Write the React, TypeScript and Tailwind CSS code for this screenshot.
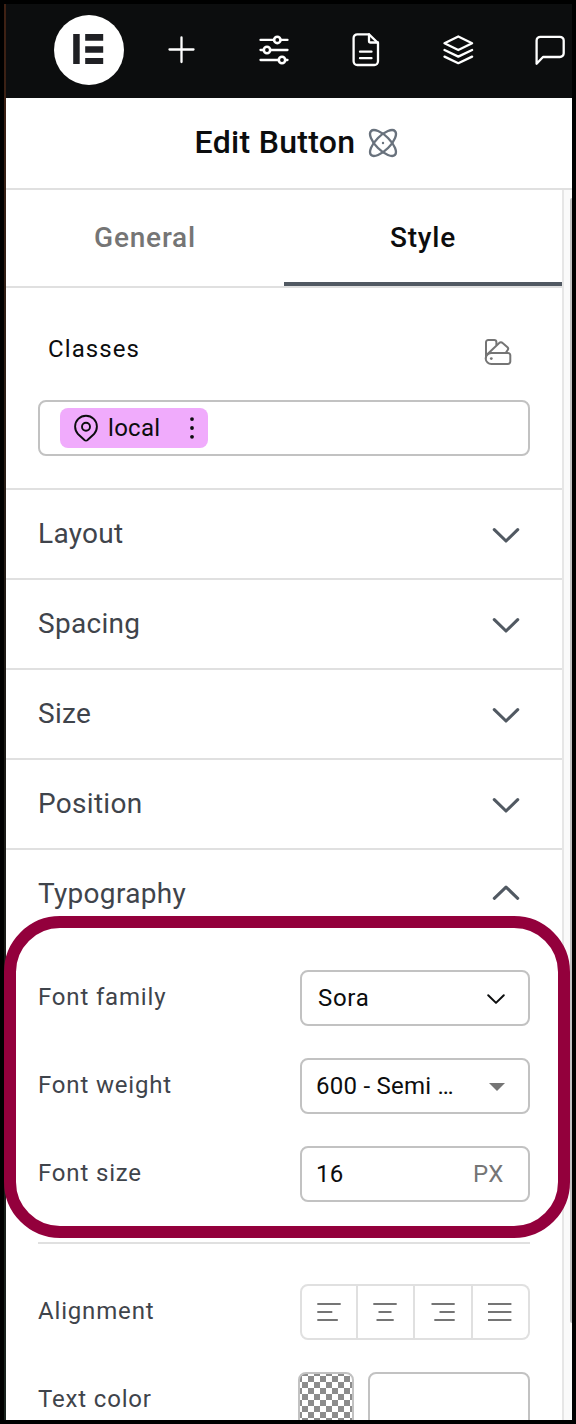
import { ReactNode } from "react";

const sections = ["Layout", "Spacing", "Size", "Position"];

// start and end of each line in the alignment buttons
const alignments = [
  { name: "left", width: "w-[58px]", lines: [[0.3, 23.7], [0.3, 15.3], [0.3, 20.8]] },
  { name: "center", width: "w-[57px] pr-px", lines: [[0.3, 23.7], [5.5, 18.5], [3.5, 20.7]] },
  { name: "right", width: "w-[58px]", lines: [[0.5, 23.7], [8.5, 23.7], [3.3, 23.7]] },
  { name: "justify", width: "w-[57px] pr-px", lines: [[0, 23.4], [0, 23.4], [0, 23.4]] },
];

const Logo = () => (
  <svg viewBox="0 0 70 70" className="w-[70px] h-[70px]">
    <circle cx="35" cy="35" r="35" fill="#fff" />
    <path
      d="M19.2 18.9h6.5v30.1h-6.5zM31.2 18.9h18v6.8h-18zM31.2 31.2h18v6.5h-18zM31.2 42.9h18v6.1h-18z"
      fill="#1f2024"
    />
  </svg>
);

const TopIcon = ({ label, children }: { label: string; children: ReactNode }) => (
  <button
    aria-label={label}
    className="flex items-center justify-center w-[92px] shrink-0"
  >
    <svg
      viewBox="0 0 48 48"
      className="w-12 h-12"
      fill="none"
      stroke="#fff"
      strokeWidth="2.3"
      strokeLinecap="round"
      strokeLinejoin="round"
    >
      {children}
    </svg>
  </button>
);

const TopBar = () => (
  <header className="flex items-center h-[94px] shrink-0 pb-0.5 pl-[37px] bg-[#0c0d0e] overflow-hidden">
    <div className="flex justify-center w-[92px] shrink-0">
      <Logo />
    </div>
    <TopIcon label="add">
      <path d="M24.5 11.5v24.5M12.5 23.5h24" />
    </TopIcon>
    <TopIcon label="settings">
      <path d="M11.5 13.9h27M11.5 24h27M11.5 34h27" />
      <g fill="#0c0d0e" strokeWidth="2.6">
        <circle cx="28.3" cy="13.9" r="3.2" />
        <circle cx="18" cy="24" r="3.2" />
        <circle cx="33" cy="34" r="3.2" />
      </g>
    </TopIcon>
    <TopIcon label="page">
      <path d="M28 8.3H16.3a3.7 3.7 0 0 0-3.7 3.7v23.3a3.7 3.7 0 0 0 3.7 3.7h17a3.7 3.7 0 0 0 3.7-3.7V17z" />
      <path d="M28 8.3V15a1.5 1.5 0 0 0 1.5 1.5H37M19 25.7h11.5M19 32.2h11.5" />
    </TopIcon>
    <TopIcon label="structure">
      <path d="M25.3 10.5l13.8 6.8-13.8 6.7-13.8-6.7z" />
      <path d="M11.5 24l13.8 6.6L39.1 24M11.5 30.6l13.8 6.6 13.8-6.6" />
    </TopIcon>
    <TopIcon label="notes">
      <path d="M11.6 37.7V14.6a3.8 3.8 0 0 1 3.8-3.8h19.5a3.8 3.8 0 0 1 3.8 3.8v12.6a3.8 3.8 0 0 1-3.8 3.8H18z" />
    </TopIcon>
  </header>
);

const AtomIcon = () => (
  <svg viewBox="0 0 32 32" className="w-8 h-8 mt-0.5" fill="none" stroke="#69727d" strokeWidth="2.4">
    <ellipse cx="16" cy="16" rx="16.9" ry="7.1" transform="rotate(45 16 16)" />
    <ellipse cx="16" cy="16" rx="16.9" ry="7.1" transform="rotate(-45 16 16)" />
    <circle cx="16" cy="16" r="1.2" fill="#69727d" stroke="none" />
  </svg>
);

const Chevron = ({ open }: { open?: boolean }) => (
  <svg
    viewBox="0 0 28 16"
    className="w-7 h-4 overflow-visible"
    fill="none"
    stroke="#515962"
    strokeWidth="3.1"
    strokeLinecap="round"
    strokeLinejoin="round"
  >
    <path d={open ? "M2.3 12.3L14 1.1l11.7 11.2" : "M2.3 3.7L14 15l11.7-11.3"} />
  </svg>
);

const Section = ({ title, open }: { title: string; open?: boolean }) => (
  <div
    className={
      open
        ? "flex items-center justify-between h-[88px] pl-8 pr-[42px]"
        : "flex items-center justify-between h-[90px] pl-8 pr-[42px] border-b-2 border-[#e0e0e0]"
    }
  >
    <h3 className="text-[28px] leading-8 tracking-[0.3px] text-[#3f444b]">{title}</h3>
    <Chevron open={open} />
  </div>
);

const Row = ({ label, children }: { label: string; children: ReactNode }) => (
  <div className="flex items-center justify-between h-14">
    <label className="pb-0.5 text-2xl tracking-[0.83px] text-[#3f444b]">{label}</label>
    {children}
  </div>
);

const Field = ({ children }: { children: ReactNode }) => (
  <div className="flex items-center justify-between w-[230px] h-14 border-2 border-[#c2c2c2] rounded-lg text-2xl text-[#0c0d0e]">
    {children}
  </div>
);

const Classes = () => (
  <div className="h-[202px] pt-8 pl-8 pr-8 border-b-2 border-[#e0e0e0]">
    <div className="flex items-center justify-between h-16 pl-[10px] pr-[18px]">
      <span className="pb-1.5 text-2xl tracking-[1.1px] text-[#0c0d0e]">Classes</span>
      <svg
        viewBox="0 0 28 28"
        className="w-7 h-7"
        fill="none"
        stroke="#757575"
        strokeWidth="2"
        strokeLinejoin="round"
      >
        <path d="M2 20.5V4.2A2.2 2.2 0 0 1 4.2 2h6a2.2 2.2 0 0 1 2.2 2.2v2.9" />
        <path d="M2.3 17.2L15.2 5a2.4 2.4 0 0 1 3.4 0l4.9 4.3a2.2 2.2 0 0 1 0 3l-1.7 2.5" />
        <path d="M7 14.9h16.9a2.4 2.4 0 0 1 2.4 2.4v6.3a2.4 2.4 0 0 1-2.4 2.4H7.5A5.5 5.5 0 0 1 7 14.9z" />
        <circle cx="7.3" cy="20.6" r="1.4" fill="#757575" stroke="none" />
      </svg>
    </div>
    <div className="flex items-center h-14 mt-4 pl-5 border-2 border-[#c2c2c2] rounded-lg">
      <div className="flex items-center w-[148px] h-10 pl-3 rounded-lg bg-[#f0abfc]">
        <svg viewBox="0 0 28 28" className="w-7 h-7" fill="none" stroke="#0c0d0e" strokeWidth="1.9">
          <path
            d="M14 26.6c-.8 0-1.3-.3-1.8-.8L6.2 20.3a10.9 10.9 0 1 1 15.6 0l-6 5.5c-.5.5-1 .8-1.8.8z"
            strokeLinejoin="round"
          />
          <circle cx="14" cy="12.7" r="4" />
        </svg>
        <span className="pl-2 text-2xl tracking-[0.3px] text-[#0c0d0e]">local</span>
        <svg viewBox="0 0 8 24" className="w-2 h-6 ml-auto mr-3" fill="#0c0d0e">
          <circle cx="4" cy="3.1" r="1.9" />
          <circle cx="4" cy="12" r="1.9" />
          <circle cx="4" cy="20.8" r="1.9" />
        </svg>
      </div>
    </div>
  </div>
);

const Typography = () => (
  <div className="px-8">
    <div className="relative flex flex-col gap-8 pt-8 pb-10 border-b-2 border-[#e0e0e0]">
      <div className="absolute -left-[34px] -top-[22px] w-[566px] h-[322px] border-12 border-[#93003c] rounded-[56px]" />
      <Row label="Font family">
        <Field>
          <span className="pl-4 tracking-[0.7px]">Sora</span>
          <svg
            viewBox="0 0 20 12"
            className="w-5 h-3 mt-px mr-[22px]"
            fill="none"
            stroke="#0c0d0e"
            strokeWidth="2"
            strokeLinecap="round"
            strokeLinejoin="round"
          >
            <path d="M2.2 2.2l7.8 7.7 7.8-7.7" />
          </svg>
        </Field>
      </Row>
      <Row label="Font weight">
        <Field>
          <span className="pl-3.5 tracking-[0.25px]">600 - Semi …</span>
          <svg viewBox="0 0 16 8" className="w-4 h-2 mt-px mr-[23px]" fill="#757575">
            <path d="M0 0h16L8 8z" />
          </svg>
        </Field>
      </Row>
      <Row label="Font size">
        <Field>
          <span className="pl-3.5 tracking-[0.3px]">16</span>
          <span className="pr-6 tracking-[0.6px] text-[#757575]">PX</span>
        </Field>
      </Row>
    </div>
    <div className="flex flex-col gap-8 pt-10">
      <Row label="Alignment">
        <div className="flex w-[230px] h-14">
          {alignments.map(({ name, width, lines }) => (
            <button
              key={name}
              aria-label={name}
              className={`${width} flex items-center justify-center border-y-2 border-r-2 border-[#e0e0e0] first:border-l-2 first:rounded-l-lg last:rounded-r-lg`}
            >
              <svg viewBox="0 0 24 20" className="w-6 h-5" stroke="#757575" strokeWidth="2">
                {lines.map(([from, to], i) => (
                  <path key={i} d={`M${from} ${2 + i * 8}H${to}`} />
                ))}
              </svg>
            </button>
          ))}
        </div>
      </Row>
      <Row label="Text color">
        <div className="flex gap-3.5">
          <div className="w-14 h-14 border-2 border-[#c2c2c2] rounded-lg bg-[conic-gradient(#8c8c8c_25%,#fff_0_50%,#8c8c8c_0_75%,#fff_0)] bg-[size:12px_12px] bg-[position:2px_2px]" />
          <div className="w-[162px] h-14 border-2 border-[#c2c2c2] rounded-lg" />
        </div>
      </Row>
    </div>
  </div>
);

const App = () => {
  return (
    <div className="w-[576px] h-[1424px] p-1 bg-black font-[Roboto,sans-serif]">
      <div className="h-[1416px] pl-0.5 overflow-hidden bg-linear-to-b from-[#3f2114] via-[#1c1a16] to-[#1a231e]">
        <div className="flex flex-col h-full bg-white">
          <TopBar />
          <div className="flex items-center justify-center gap-3 h-[92px] shrink-0 pl-4 pb-0.5 border-b-2 border-[#e0e0e0]">
            <h1 className="text-[32px] leading-10 font-medium tracking-[0.3px] text-[#0c0d0e]">
              Edit Button
            </h1>
            <AtomIcon />
          </div>
          <div className="flex flex-1 min-h-0">
            <main className="w-[556px]">
              <div className="flex h-[98px] border-b-2 border-[#e0e0e0] text-[28px] font-medium tracking-[0.8px]">
                <button className="w-[278px] text-[#757575]">General</button>
                <button className="w-[278px] pt-1 border-b-4 border-[#515962] text-[#0c0d0e]">
                  Style
                </button>
              </div>
              <Classes />
              {sections.map((title) => (
                <Section key={title} title={title} />
              ))}
              <Section title="Typography" open />
              <Typography />
            </main>
            <div className="flex justify-end w-2.5 border-l-2 border-[#e6e6e6] bg-[#fafafa]">
              <div className="w-0.5 h-[1125px] mt-2 rounded-l-full bg-[#c1c1c1]" />
            </div>
          </div>
        </div>
      </div>
    </div>
  );
};

export default App;
